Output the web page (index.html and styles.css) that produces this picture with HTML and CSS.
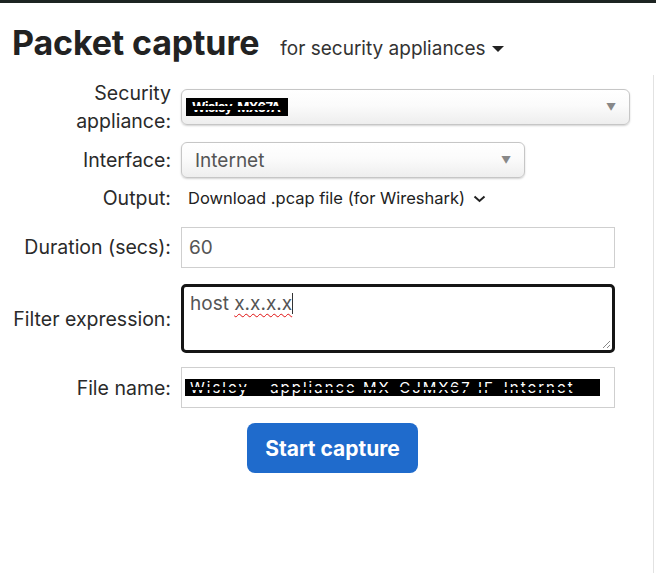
FILE: index.html
```html
<!DOCTYPE html>
<html lang="en">
<head>
  <meta charset="UTF-8">
  <title>Packet capture</title>
  <meta name="viewport" content="width=device-width, initial-scale=1.0">
  <link rel="stylesheet" href="styles.css">
</head>
<body>
  <div class="topbar"></div>
  <div class="layout">
    <main class="content">
      <div class="title-row">
        <h1>Packet capture</h1>
        <span class="subtitle">for security appliances
          <svg class="caret" width="12" height="7" viewBox="0 0 12 7"><polygon points="0,0 12,0 6,6" fill="#222"/></svg>
        </span>
      </div>

      <form class="capture-form" onsubmit="return false">
        <label class="field-label two-line">Security<br>appliance:</label>
        <div class="select select-wide">
          <span class="redact redact-device">
            <span class="scribble"></span>
            <span class="redact-text">Wisley-MX67A</span>
          </span>
          <span class="arrow">&#9660;</span>
        </div>

        <label class="field-label">Interface:</label>
        <div class="select select-mid">
          <span class="select-value">Internet</span>
          <span class="arrow">&#9660;</span>
        </div>

        <label class="field-label">Output:</label>
        <div class="output-choice">
          Download .pcap file (for Wireshark)
          <svg class="chevron" width="13" height="8" viewBox="0 0 13 8"><polyline points="1.5,1.5 6.5,6 11.5,1.5" fill="none" stroke="#222" stroke-width="2"/></svg>
        </div>

        <label class="field-label">Duration (secs):</label>
        <div class="text-input">60</div>

        <label class="field-label">Filter expression:</label>
        <div class="text-area">
          host <span class="misspelt">x.x.x.x</span><span class="cursor"></span>
          <svg class="grip" width="10" height="10" viewBox="0 0 10 10">
            <line x1="9" y1="2" x2="2" y2="9" stroke="#888" stroke-width="1"/>
            <line x1="9" y1="6" x2="6" y2="9" stroke="#888" stroke-width="1"/>
          </svg>
        </div>

        <label class="field-label">File name:</label>
        <div class="text-input">
          <span class="redact redact-file">Wisley - appliance MX-CJMX67 IF-Internet</span>
        </div>

        <span></span>
        <div class="actions">
          <button type="submit" class="btn-primary">Start capture</button>
        </div>
      </form>
    </main>
    <aside class="sidebar"></aside>
  </div>
</body>
</html>
```

FILE: styles.css
```css
body {
  margin: 0;
  font-family: Inter, "Noto Sans", sans-serif;
  color: #222;
  background: #fff;
}
.topbar {
  height: 3px;
  background: #1d2422;
}
.layout {
  display: flex;
}
.content {
  width: 653px;
  padding-left: 10px;
  box-sizing: border-box;
}
.sidebar {
  flex: 1;
  margin-top: 72px;
  height: 500px;
  border-left: 1px solid #e2e2e2;
}

/* header */
.title-row {
  display: flex;
  align-items: baseline;
  gap: 21px;
  margin-top: 20px;
  height: 57px;
}
h1 {
  margin: 0 0 0 2px;
  font-size: 34px;
  line-height: 40px;
  font-weight: 700;
  color: #222;
  letter-spacing: -0.15px;
}
.subtitle {
  font-size: 19px;
  color: #333;
}
.caret {
  margin-left: 1px;
  vertical-align: 2px;
}

/* form grid */
.capture-form {
  display: grid;
  grid-template-columns: 161px 450px;
  grid-template-rows: 54px 52px 24px 74px 69px 69px 51px;
  column-gap: 10px;
  align-items: center;
}
.field-label {
  text-align: right;
  font-size: 19.5px;
  color: #2a2a2a;
}
.field-label.two-line {
  line-height: 28px;
}

.select {
  position: relative;
  height: 36px;
  box-sizing: border-box;
  border: 1px solid #c6c6c6;
  border-radius: 6px;
  background: linear-gradient(#fff 0%, #fbfbfb 45%, #eeeeee 100%);
  box-shadow: 0 1px 2px rgba(0, 0, 0, 0.18);
  display: flex;
  align-items: center;
  padding: 0 13px;
}
.select-wide { width: 449px; }
.select-mid { width: 344px; }
.select-value {
  font-size: 19px;
  color: #555;
}
.arrow {
  margin-left: auto;
  font-size: 10px;
  color: #888;
}

.redact {
  background: #000;
  color: #fff;
}
.redact-device {
  position: relative;
  margin-left: -9px;
  width: 102px;
  height: 18px;
  display: flex;
  align-items: center;
  overflow: hidden;
}
.redact-text {
  font-size: 13px;
  font-weight: 700;
  letter-spacing: -0.5px;
  padding-left: 6px;
  text-decoration: line-through;
  text-decoration-color: #000;
  text-decoration-thickness: 4px;
}
.scribble {
  position: absolute;
  left: -10px;
  top: 8px;
  width: 14px;
  height: 3px;
  background: #000;
}

.output-choice {
  font-size: 16.5px;
  color: #222;
  padding-left: 7px;
}
.chevron {
  margin-left: 3px;
  vertical-align: 1px;
}

.text-input {
  width: 434px;
  height: 41px;
  box-sizing: border-box;
  border: 1px solid #cfcfcf;
  padding: 0 7px;
  display: flex;
  align-items: center;
  font-size: 19px;
  color: #555;
}
.redact-file {
  display: block;
  width: 415px;
  height: 17px;
  margin-left: -4px;
  padding-left: 5px;
  box-sizing: border-box;
  font-size: 15px;
  line-height: 17px;
  letter-spacing: 2px;
  white-space: nowrap;
  text-decoration: line-through;
  text-decoration-color: #000;
  text-decoration-thickness: 3px;
}

.text-area {
  position: relative;
  width: 434px;
  height: 69px;
  box-sizing: border-box;
  border: 3px solid #151515;
  border-radius: 5px;
  padding: 5px 6px;
  font-size: 19px;
  line-height: 24px;
  color: #555;
}
.misspelt {
  text-decoration: underline wavy #e01010;
  text-decoration-thickness: 1px;
  text-underline-offset: 3px;
}
.cursor {
  display: inline-block;
  width: 1px;
  height: 21px;
  background: #333;
  vertical-align: -4px;
}
.grip {
  position: absolute;
  right: 1px;
  bottom: 1px;
}

.actions {
  padding-left: 66px;
  align-self: end;
}
.btn-primary {
  width: 171px;
  height: 50px;
  border: none;
  border-radius: 8px;
  background: #1f6bcc;
  color: #fff;
  font-family: Inter, "Noto Sans", sans-serif;
  font-size: 21px;
  font-weight: 700;
  cursor: pointer;
}
```
